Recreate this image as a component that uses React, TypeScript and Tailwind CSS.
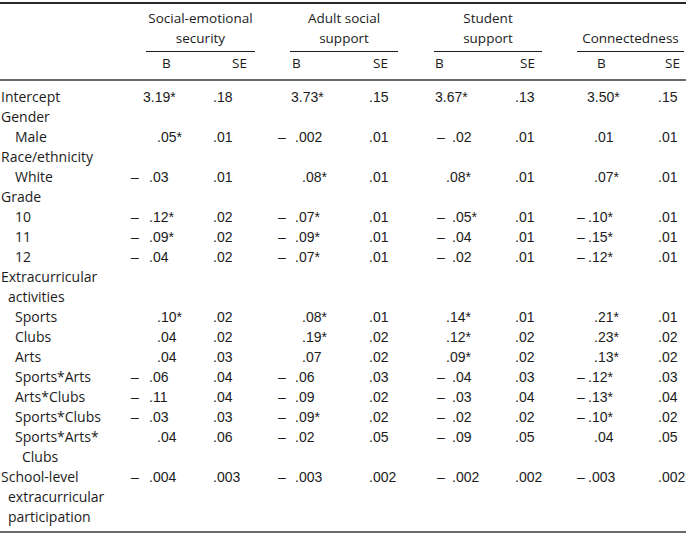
import React from "react";

// regression table: B / SE per outcome
type Row = {
  label: string[];
  indent: 0 | 1;
  vals?: string[]; // B, SE x 4 groups; "-" prefix = negative
};

const rows: Row[] = [
  { label: ["Intercept"], indent: 0, vals: ["3.19*", ".18", "3.73*", ".15", "3.67*", ".13", "3.50*", ".15"] },
  { label: ["Gender"], indent: 0 },
  { label: ["Male"], indent: 1, vals: [".05*", ".01", "-.002", ".01", "-.02", ".01", ".01", ".01"] },
  { label: ["Race/ethnicity"], indent: 0 },
  { label: ["White"], indent: 1, vals: ["-.03", ".01", ".08*", ".01", ".08*", ".01", ".07*", ".01"] },
  { label: ["Grade"], indent: 0 },
  { label: ["10"], indent: 1, vals: ["-.12*", ".02", "-.07*", ".01", "-.05*", ".01", "-.10*", ".01"] },
  { label: ["11"], indent: 1, vals: ["-.09*", ".02", "-.09*", ".01", "-.04", ".01", "-.15*", ".01"] },
  { label: ["12"], indent: 1, vals: ["-.04", ".02", "-.07*", ".01", "-.02", ".01", "-.12*", ".01"] },
  { label: ["Extracurricular", "activities"], indent: 0 },
  { label: ["Sports"], indent: 1, vals: [".10*", ".02", ".08*", ".01", ".14*", ".01", ".21*", ".01"] },
  { label: ["Clubs"], indent: 1, vals: [".04", ".02", ".19*", ".02", ".12*", ".02", ".23*", ".02"] },
  { label: ["Arts"], indent: 1, vals: [".04", ".03", ".07", ".02", ".09*", ".02", ".13*", ".02"] },
  { label: ["Sports*Arts"], indent: 1, vals: ["-.06", ".04", "-.06", ".03", "-.04", ".03", "-.12*", ".03"] },
  { label: ["Arts*Clubs"], indent: 1, vals: ["-.11", ".04", "-.09", ".02", "-.03", ".04", "-.13*", ".04"] },
  { label: ["Sports*Clubs"], indent: 1, vals: ["-.03", ".03", "-.09*", ".02", "-.02", ".02", "-.10*", ".02"] },
  { label: ["Sports*Arts*", "Clubs"], indent: 1, vals: [".04", ".06", "-.02", ".05", "-.09", ".05", ".04", ".05"] },
  {
    label: ["School-level", "extracurricular", "participation"],
    indent: 0,
    vals: ["-.004", ".003", "-.003", ".002", "-.002", ".002", "-.003", ".002"],
  },
];

const dashW = ["w-[18px]", "w-[17px]", "w-[15px]", "w-[11px]"];
const posPad = ["pl-[26px]", "pl-[24px]", "pl-[9px]", "pl-[17px]"];
const bigPad = ["pl-[12px]", "pl-[13px]", "-ml-[2px]", "pl-[10px]"];

const BCell = ({ v, g }: { v: string; g: number }) => {
  if (v.startsWith("-")) {
    return (
      <div className="flex whitespace-nowrap">
        <span className={`inline-block ${dashW[g]}`}>–</span>
        <span>{v.slice(1)}</span>
      </div>
    );
  }
  if (v.startsWith(".")) return <div className={`whitespace-nowrap ${posPad[g]}`}>{v}</div>;
  return <div className={`whitespace-nowrap ${bigPad[g]}`}>{v}</div>;
};

const cols = "grid grid-cols-[131px_82px_65px_91px_68px_78px_62px_81px_28px]";
const label = "font-['Open_Sans',sans-serif]";

export default function App() {
  return (
    <div
      className="w-[686px] h-[535px] bg-white text-[#1c1c1c] text-[14px] leading-[20px] pt-[2px]"
      style={{ fontFamily: "'Liberation Sans', Arial, sans-serif" }}
    >
      <div className="border-t-2 border-[#2a2a2a]" />

      {/* group headings */}
      <div className={`${cols} pt-[4px] ${label} text-[13.5px]`}>
        <div />
        <div className="col-span-2 ml-[15px] mr-[23px] border-b border-[#1c1c1c] pb-[3px] text-center">
          Social-emotional
          <br />
          security
        </div>
        <div className="col-span-2 ml-[12px] mr-[39px] border-b border-[#1c1c1c] pb-[3px] text-center">
          Adult social
          <br />
          support
        </div>
        <div className="col-span-2 -ml-[3px] mr-[35px] border-b border-[#1c1c1c] pb-[3px] text-center">
          Student
          <br />
          support
        </div>
        <div className="col-span-2 mr-[2px] border-b border-[#1c1c1c] pb-[3px] text-center flex flex-col justify-end">
          Connectedness
        </div>
      </div>

      <div className={`${cols} pt-[1px] pb-[6px] ${label} text-[13.5px]`}>
        <div />
        <div className="pl-[31px]">B</div>
        <div className="pl-[19px]">SE</div>
        <div className="pl-[14px]">B</div>
        <div className="pl-[4px]">SE</div>
        <div className="-ml-[2px]">B</div>
        <div className="pl-[5px]">SE</div>
        <div className="pl-[20px]">B</div>
        <div className="pl-[7px]">SE</div>
      </div>

      <div className="border-t-2 border-[#6a6a6a]" />

      <div className="pt-[6px] pb-[4px]">
        {rows.map((r, i) => (
          <div key={i} className={cols}>
            <div className={`${label} ${r.indent ? "pl-[15px]" : "pl-[1px]"}`}>
              {r.label.map((l, j) => (
                <div key={j} className={`whitespace-nowrap ${j > 0 ? "pl-[7px]" : ""}`}>
                  {l}
                </div>
              ))}
            </div>
            {r.vals
              ? r.vals.map((v, k) =>
                  k % 2 === 0 ? (
                    <BCell key={k} v={v} g={k / 2} />
                  ) : (
                    <div key={k} className="whitespace-nowrap">
                      {v}
                    </div>
                  )
                )
              : null}
          </div>
        ))}
      </div>

      <div className="border-t-2 border-[#6a6a6a]" />
    </div>
  );
}
